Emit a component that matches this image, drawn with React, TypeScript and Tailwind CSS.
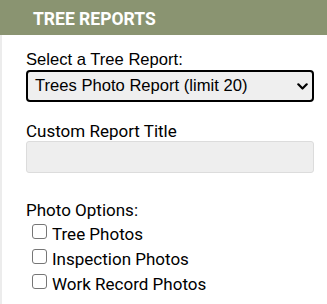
import React from "react";

function ChevronDown() {
  return (
    <svg width="11" height="7" viewBox="0 0 11 7" className="shrink-0">
      <path d="M1.3 1.3 L5.5 5.5 L9.7 1.3" fill="none" stroke="#000" strokeWidth="2.2" strokeLinecap="round" strokeLinejoin="round" />
    </svg>
  );
}

function CheckRow({ label }: { label: string }) {
  return (
    <label className="flex items-start h-[25px]">
      <span className="mt-[2px] ml-[6px] w-[15px] h-[15px] border border-[#767676] rounded-[3px] bg-white" />
      <span className="mt-[2px] ml-[5px] leading-[20px]">{label}</span>
    </label>
  );
}

export default function App() {
  return (
    <div className="w-[327px] h-[304px] bg-white text-black font-['Roboto',sans-serif] text-[17px]">
      <div className="h-[35px] bg-[#8a9471] pt-[9px] pl-[33px]">
        <h2 className="text-white font-bold text-[17.5px] leading-[20px]">TREE REPORTS</h2>
      </div>
      <div className="border-l-2 border-[#ececec] h-[269px] pl-[24px] pr-[13px] pt-[15px]">
        <div className="font-['Liberation_Sans',Arial,sans-serif] text-[16.6px] leading-[20px]">Select a Tree Report:</div>
        <div className="h-[32px] w-[288px] border-2 border-black rounded-[4px] bg-[#efefef] flex items-center justify-between pl-[7px] pr-[4px] font-['Liberation_Sans',Arial,sans-serif] text-[16.6px] leading-[20px]">
          <span>Trees Photo Report (limit 20)</span>
          <ChevronDown />
        </div>
        <div className="mt-[19px] leading-[20px]">Custom Report Title</div>
        <div className="h-[32px] w-[288px] border border-[#dcdcdc] rounded-[3px] bg-[#eeeeee]" />
        <div className="mt-[27px] leading-[20px]">Photo Options:</div>
        <div className="mt-[2px] flex flex-col">
          <CheckRow label="Tree Photos" />
          <CheckRow label="Inspection Photos" />
          <CheckRow label="Work Record Photos" />
        </div>
      </div>
    </div>
  );
}
